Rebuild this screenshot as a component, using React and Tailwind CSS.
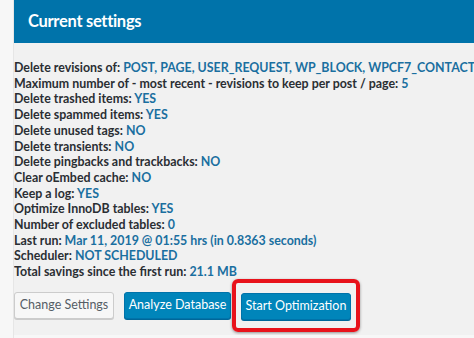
import React from "react";

const rows = [
  ["Delete revisions of:", "POST, PAGE, USER_REQUEST, WP_BLOCK, WPCF7_CONTACT_FORM"],
  ["Maximum number of - most recent - revisions to keep per post / page:", "5"],
  ["Delete trashed items:", "YES"],
  ["Delete spammed items:", "YES"],
  ["Delete unused tags:", "NO"],
  ["Delete transients:", "NO"],
  ["Delete pingbacks and trackbacks:", "NO"],
  ["Clear oEmbed cache:", "NO"],
  ["Keep a log:", "YES"],
  ["Optimize InnoDB tables:", "YES"],
  ["Number of excluded tables:", "0"],
  ["Last run:", "Mar 11, 2019 @ 01:55 hrs (in 0.8363 seconds)"],
  ["Scheduler:", "NOT SCHEDULED"],
  ["Total savings since the first run:", "21.1 MB"],
];

const App = () => {
  return (
    <div
      className="w-[474px] h-[338px] overflow-hidden bg-[#f7f7f7] flex"
      style={{ fontFamily: 'Lato, "Open Sans", sans-serif' }}
    >
      <div className="w-[14px] shrink-0 border-r border-[#e6e6e6]" />
      <div className="flex-1 flex flex-col h-[335px] bg-[#f1f1f1] overflow-hidden">
        <div className="h-[43px] shrink-0 bg-[#0073aa] flex items-center pl-[14px]">
          <h2 className="text-white text-[16.5px] font-bold tracking-[-0.3px] pb-[1px]">Current settings</h2>
        </div>
        <div className="pt-[17px] flex flex-col text-[12.4px] leading-[15.7px] font-bold whitespace-nowrap">
          {rows.map(([label, value]) => (
            <div key={label} className="text-[#2a2e33] overflow-hidden">
              {label} <span className="text-[#1a6fa0]">{value}</span>
            </div>
          ))}
        </div>
        <div className="flex items-center gap-[10px] mt-[12px]">
          <button className="h-[27px] w-[100px] bg-[#f7f7f7] border border-[#cccccc] rounded-[3px] text-[12.5px] text-[#555d66] shadow-[0_1px_0_#ccc]">
            Change Settings
          </button>
          <button className="h-[27px] w-[107px] bg-[#0085ba] border border-[#0073aa] rounded-[3px] text-[12.5px] text-white shadow-[0_1px_0_#006799]">
            Analyze Database
          </button>
          <div className="relative">
            <button className="h-[27px] w-[110px] bg-[#0085ba] border border-[#0073aa] rounded-[3px] text-[12.5px] text-white shadow-[0_1px_0_#006799]">
              Start Optimization
            </button>
            <div className="absolute left-[-9px] top-[-13px] w-[128px] h-[53px] border-[4px] border-[#e8121b] rounded-[6px] shadow-[0_1px_3px_rgba(0,0,0,0.4)]" />
          </div>
        </div>
      </div>
    </div>
  );
};

export default App;
